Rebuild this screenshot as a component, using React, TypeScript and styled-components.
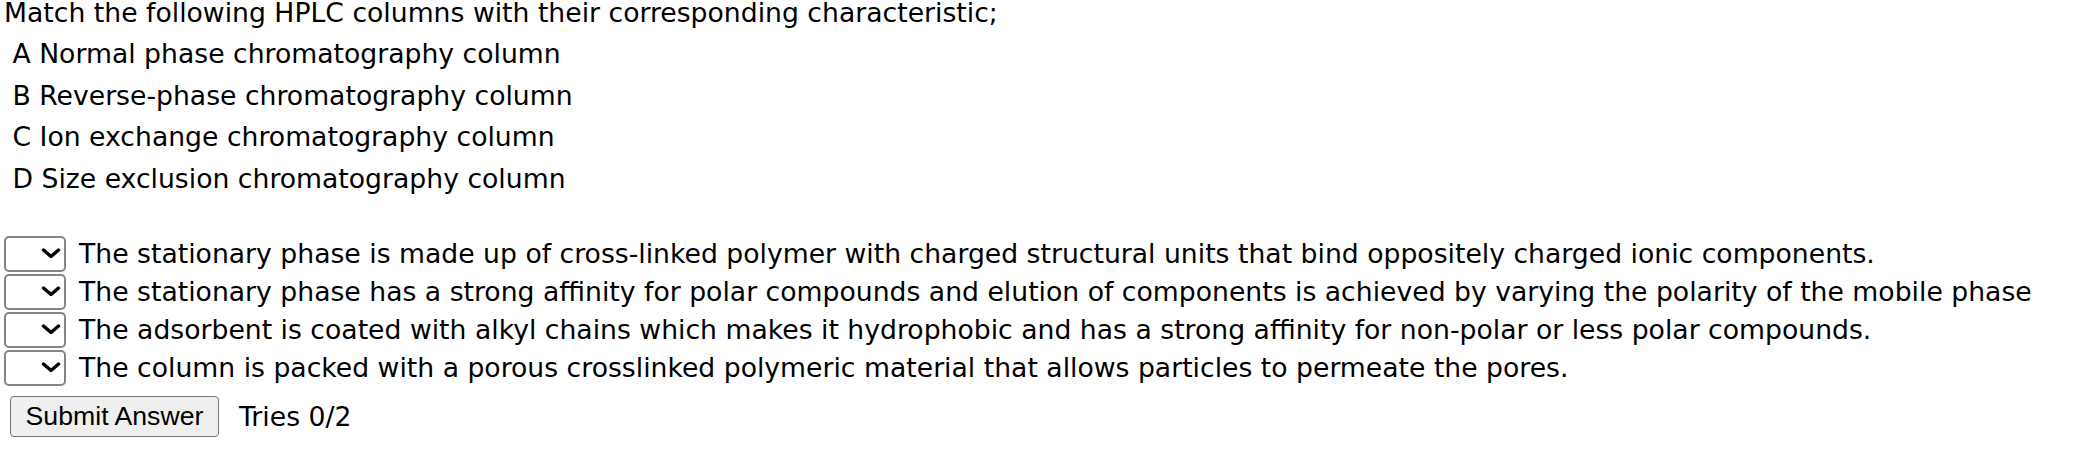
import React from "react";
import styled, { createGlobalStyle } from "styled-components";

const Global = createGlobalStyle`
  html, body { margin: 0; padding: 0; background: #fff; }
  body { font-family: "DejaVu Sans", Verdana, sans-serif; color: #000; }
`;

const Page = styled.div`
  padding: 0 4px;
  font-size: 26.66px;
`;

const Title = styled.div`
  line-height: 25px;
  white-space: pre;
`;

const OptionList = styled.div`
  margin-top: 8px;
  margin-bottom: 36px;
`;

const OptionLine = styled.div`
  line-height: 41.5px;
  white-space: pre;
`;

const Rows = styled.div`
  display: flex;
  flex-direction: column;
`;

const Row = styled.div`
  display: flex;
  align-items: center;
  height: 37.9px;
  gap: 13px;
  white-space: nowrap;
`;

const SelectWrap = styled.span`
  position: relative;
  display: inline-flex;
  flex: none;
`;

const Select = styled.select`
  appearance: none;
  -webkit-appearance: none;
  width: 62px;
  height: 36px;
  margin: 0;
  border: 2px solid #858585;
  border-radius: 5px;
  background: #fff;
  font: inherit;
`;

const Chevron = styled.svg`
  position: absolute;
  right: 5px;
  top: 12px;
  width: 20px;
  height: 11px;
  pointer-events: none;
`;

const RowText = styled.span`
  line-height: 31px;
`;

const Footer = styled.div`
  display: flex;
  align-items: center;
  gap: 20px;
  margin-top: 9px;
  padding-left: 6px;
`;

const SubmitButton = styled.button`
  height: 41px;
  width: 209px;
  padding: 0;
  border: 1.5px solid #767676;
  border-radius: 4px;
  background: #efefef;
  color: #000;
  font-family: "Liberation Sans", Arial, sans-serif;
  font-size: 26.66px;
`;

const Tries = styled.span`
  line-height: 31px;
`;

const options = [
  " A Normal phase chromatography column",
  " B Reverse-phase chromatography column",
  " C Ion exchange chromatography column",
  " D Size exclusion chromatography column",
];

const statements = [
  "The stationary phase is made up of cross-linked polymer with charged structural units that bind oppositely charged ionic components.",
  "The stationary phase has a strong affinity for polar compounds and elution of components is achieved by varying the polarity of the mobile phase",
  "The adsorbent is coated with alkyl chains which makes it hydrophobic and has a strong affinity for non-polar or less polar compounds.",
  "The column is packed with a porous crosslinked polymeric material that allows particles to permeate the pores.",
];

export default function App() {
  return (
    <>
      <Global />
      <Page>
        <Title>Match the following HPLC columns with their corresponding characteristic;</Title>
        <OptionList>
          {options.map((o) => (
            <OptionLine key={o}>{o}</OptionLine>
          ))}
        </OptionList>
        <Rows>
          {statements.map((s, i) => (
            <Row key={i}>
              <SelectWrap>
                <Select defaultValue="">
                  <option value=""></option>
                  <option value="A">A</option>
                  <option value="B">B</option>
                  <option value="C">C</option>
                  <option value="D">D</option>
                </Select>
                <Chevron viewBox="0 0 20 11">
                  <polyline points="2.5,2 10,8.5 17.5,2" fill="none" stroke="#000" strokeWidth="3.4" strokeLinecap="round" strokeLinejoin="round" />
                </Chevron>
              </SelectWrap>
              <RowText>{s}</RowText>
            </Row>
          ))}
        </Rows>
        <Footer>
          <SubmitButton type="button">Submit Answer</SubmitButton>
          <Tries>Tries 0/2</Tries>
        </Footer>
      </Page>
    </>
  );
}
